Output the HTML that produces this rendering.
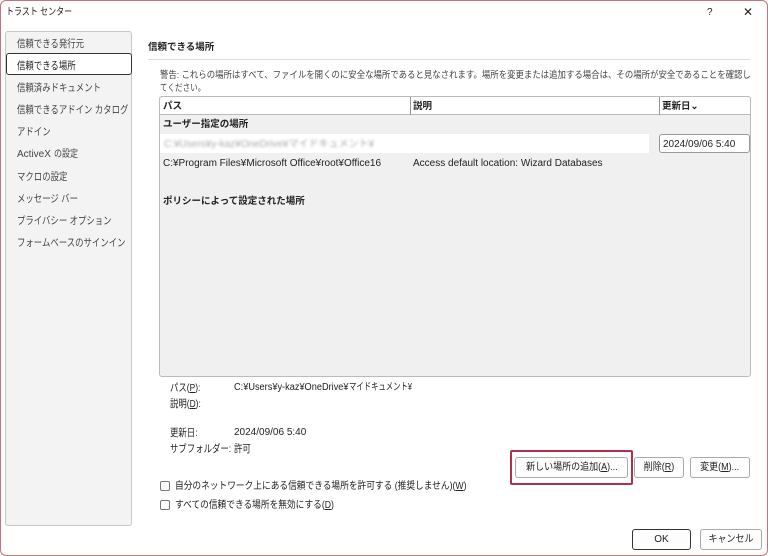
<!DOCTYPE html>
<html><head><meta charset="utf-8"><style>
*{margin:0;padding:0;box-sizing:border-box}
body{width:768px;height:556px;background:#fff;font-family:"Liberation Sans","Noto Sans CJK JP",sans-serif;color:#222;font-size:10px;position:relative;overflow:hidden}
.a{position:absolute;white-space:nowrap;line-height:12px;transform-origin:left center}
.n{transform:scaleX(0.8)}
.win{position:absolute;left:0;top:0;width:768px;height:556px;border:1px solid #c9707e;border-radius:6px}
.nav{position:absolute;left:5px;top:31px;width:127px;height:495px;background:#f3f3f3;border:1px solid #c8c8c8;border-radius:3px}
.sel{position:absolute;left:6px;top:53px;width:126px;height:22px;background:#fff;border:1.5px solid #333;border-radius:3px}
.tbl{position:absolute;left:159px;top:96px;width:592px;height:281px;background:#f0f0f0;border:1px solid #bbb;border-radius:3px}
.btn{position:absolute;height:21px;border:1px solid #aaa;border-radius:3px;background:#fdfdfd;text-align:center;line-height:19px;font-size:10px;white-space:nowrap;overflow:hidden}
.btn span{display:inline-block;transform:scaleX(0.9)}
.cb{position:absolute;width:10px;height:10px;border:1px solid #777;border-radius:2px;background:#fff}
</style></head><body>
<div class="win"></div>
<div class="a n" style="left:6px;top:7px;font-size:10px">トラスト センター</div>
<div class="a" style="left:707px;top:7px;font-size:10px">?</div>
<div class="a" style="left:743px;top:6px;font-size:12px">✕</div>

<div class="nav"></div>
<div class="sel"></div>
<div class="a n" style="left:17px;top:38px;color:#444;font-size:10.5px">信頼できる発行元</div>
<div class="a n" style="left:17px;top:60px;color:#222;font-size:10.5px">信頼できる場所</div>
<div class="a n" style="left:17px;top:82px;color:#444;font-size:10.5px">信頼済みドキュメント</div>
<div class="a n" style="left:17px;top:104px;color:#444;font-size:10.5px">信頼できるアドイン カタログ</div>
<div class="a n" style="left:17px;top:126px;color:#444;font-size:10.5px">アドイン</div>
<div class="a" style="left:17px;top:149px;color:#444">ActiveX <span style="display:inline-block;transform:scaleX(.8);transform-origin:left">の設定</span></div>
<div class="a n" style="left:17px;top:171px;color:#444;font-size:10.5px">マクロの設定</div>
<div class="a n" style="left:17px;top:193px;color:#444;font-size:10.5px">メッセージ バー</div>
<div class="a n" style="left:17px;top:215px;color:#444;font-size:10.5px">プライバシー オプション</div>
<div class="a n" style="left:17px;top:237px;color:#444;font-size:10.5px">フォームベースのサインイン</div>

<div class="a" style="left:148px;top:42px;font-weight:bold;font-size:9.5px">信頼できる場所</div>
<div style="position:absolute;left:148px;top:59px;width:602px;height:1px;background:#ddd"></div>
<div class="a" style="left:160px;top:70px;font-size:9.5px;color:#444;transform:scaleX(0.885)">警告: これらの場所はすべて、ファイルを開くのに安全な場所であると見なされます。場所を変更または追加する場合は、その場所が安全であることを確認し</div>
<div class="a n" style="left:160px;top:83px;font-size:9.5px;color:#444">てください。</div>

<div class="tbl"></div>
<div style="position:absolute;left:160px;top:97px;width:590px;height:18px;background:#fff;border-bottom:1px solid #bbb;border-radius:3px 3px 0 0"></div>
<div style="position:absolute;left:410px;top:97px;width:1px;height:18px;background:#999"></div>
<div style="position:absolute;left:659px;top:97px;width:1px;height:18px;background:#999"></div>
<div class="a" style="left:163px;top:101px;font-weight:bold;font-size:9.5px">パス</div>
<div class="a" style="left:413px;top:101px;font-weight:bold;font-size:9.5px">説明</div>
<div class="a" style="left:662px;top:101px;font-weight:bold;font-size:9.5px">更新日⌄</div>
<div class="a" style="left:163px;top:119px;font-weight:bold;font-size:9.5px">ユーザー指定の場所</div>
<div style="position:absolute;left:160px;top:134px;width:489px;height:19px;background:#fff"></div>
<div style="position:absolute;left:659px;top:134px;width:91px;height:19px;background:#fff;border:1px solid #999;border-radius:3px"></div>
<div class="a" style="left:164px;top:139px;color:#aaa;filter:blur(1.2px);font-size:10px">C:¥Users¥y-kaz¥OneDrive¥マイドキュメント¥</div>
<div class="a" style="left:663px;top:139px">2024/09/06 5:40</div>
<div class="a" style="left:163px;top:158px">C:¥Program Files¥Microsoft Office¥root¥Office16</div>
<div class="a" style="left:413px;top:158px">Access default location: Wizard Databases</div>
<div class="a" style="left:163px;top:196px;font-weight:bold;font-size:9.5px">ポリシーによって設定された場所</div>

<div class="a n" style="left:170px;top:382px;font-size:10.5px">パス(<u>P</u>):</div>
<div class="a" style="left:234px;top:382px;font-size:10px;transform:scaleX(.92)">C:¥Users¥y-kaz¥OneDrive¥<span style="display:inline-block;transform:scaleX(.8);transform-origin:left">マイドキュメント¥</span></div>
<div class="a n" style="left:170px;top:398px;font-size:10.5px">説明(<u>D</u>):</div>
<div class="a n" style="left:170px;top:427px;font-size:10.5px">更新日:</div>
<div class="a" style="left:234px;top:427px;font-size:10px">2024/09/06 5:40</div>
<div class="a n" style="left:170px;top:443px;font-size:10.5px">サブフォルダー:</div>
<div class="a n" style="left:234px;top:443px;font-size:10.5px">許可</div>

<div style="position:absolute;left:510px;top:450px;width:123px;height:35px;border:2px solid #b0304a;border-radius:2px"></div>
<div class="btn" style="left:515px;top:457px;width:113px"><span>新しい場所の追加(<u>A</u>)...</span></div>
<div class="btn" style="left:634px;top:457px;width:50px"><span>削除(<u>R</u>)</span></div>
<div class="btn" style="left:690px;top:457px;width:60px"><span>変更(<u>M</u>)...</span></div>

<div class="cb" style="left:160px;top:481px"></div>
<div class="a" style="left:175px;top:481px;font-size:10px;transform:scaleX(.87)">自分のネットワーク上にある信頼できる場所を許可する (推奨しません)(<u>W</u>)</div>
<div class="cb" style="left:160px;top:500px"></div>
<div class="a" style="left:175px;top:500px;font-size:10px;transform:scaleX(.87)">すべての信頼できる場所を無効にする(<u>D</u>)</div>

<div class="btn" style="left:632px;top:529px;width:59px;border:1.5px solid #333">OK</div>
<div class="btn" style="left:700px;top:529px;width:62px"><span>キャンセル</span></div>
</body></html>
